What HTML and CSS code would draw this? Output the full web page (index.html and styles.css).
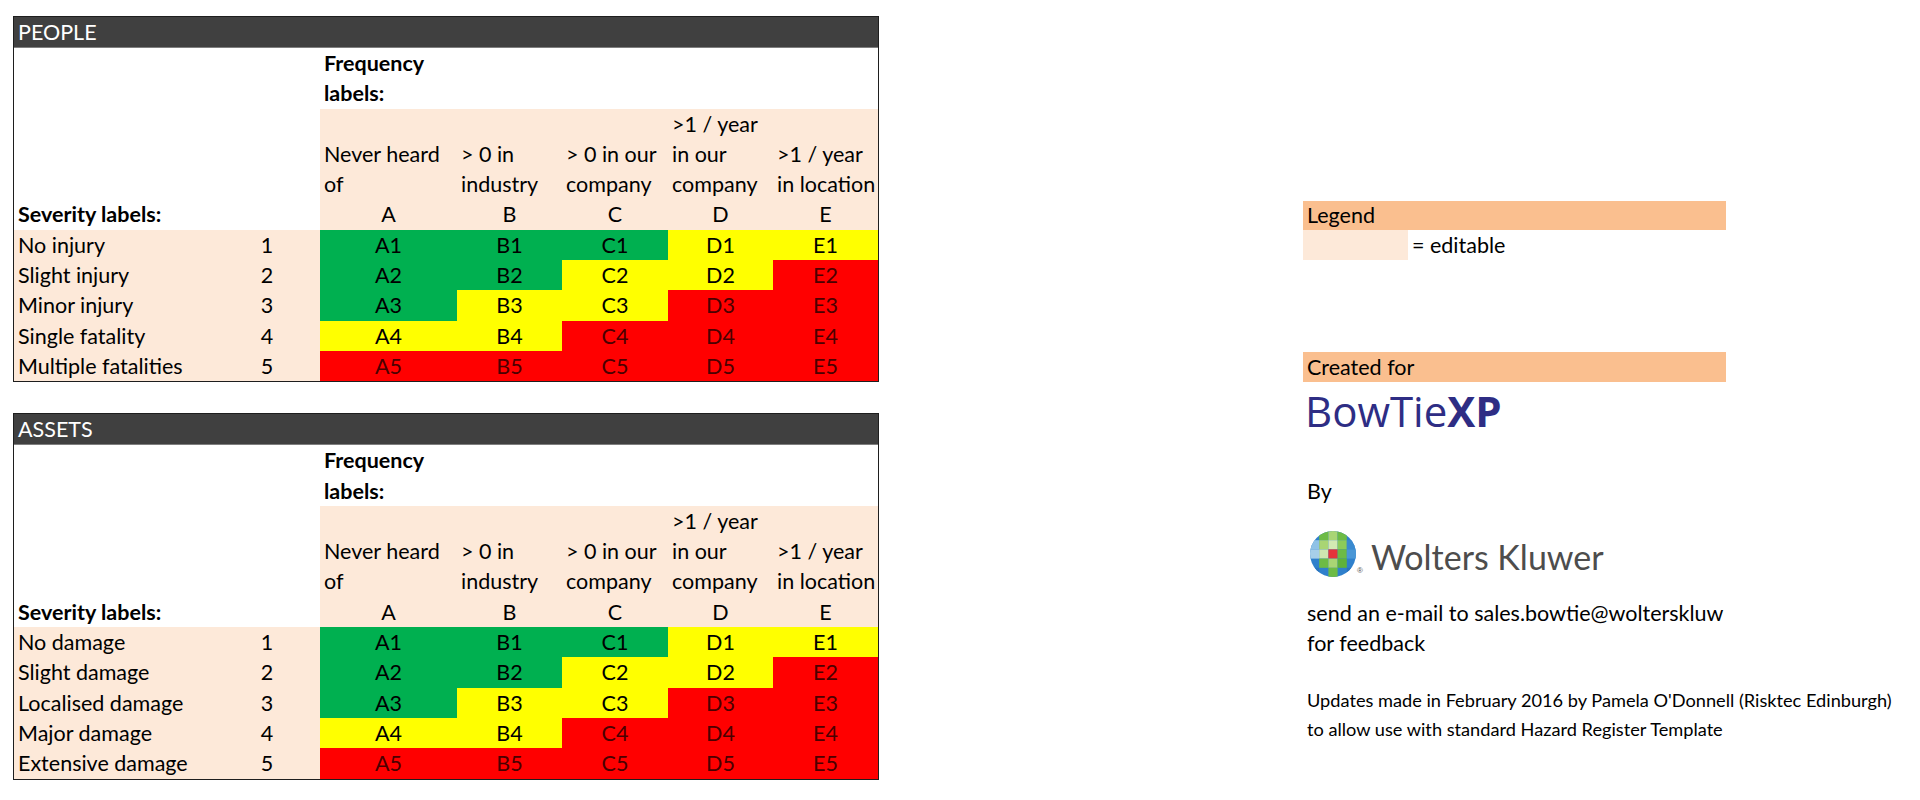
FILE: index.html
```html
<!DOCTYPE html>
<html lang="en">
<head>
<meta charset="utf-8">
<title>Risk matrix</title>
<link rel="stylesheet" href="styles.css">
</head>
<body>
<div class="page">
  <div class="left">
    <section class="matrix">
      <div class="mhead">PEOPLE</div>
      <div class="mgrid hdr">
        <div class="freq">Frequency<br>labels:</div>
        <div class="fl ca"><span>Never heard</span><span>of</span></div>
        <div class="fl cb"><span>&gt; 0 in</span><span>industry</span></div>
        <div class="fl cc"><span>&gt; 0 in our</span><span>company</span></div>
        <div class="fl cd"><span>&gt;1 / year</span><span>in our</span><span>company</span></div>
        <div class="fl ce"><span>&gt;1 / year</span><span>in location</span></div>
        <div class="sev">Severity labels:</div>
        <div class="let ca">A</div>
        <div class="let cb">B</div>
        <div class="let cc">C</div>
        <div class="let cd">D</div>
        <div class="let ce">E</div>
      </div>
      <div class="mgrid body">
        <div class="lab">No injury</div><div class="num">1</div>
        <div class="cell g">A1</div><div class="cell g">B1</div><div class="cell g">C1</div><div class="cell y">D1</div><div class="cell y">E1</div>
        <div class="lab">Slight injury</div><div class="num">2</div>
        <div class="cell g">A2</div><div class="cell g">B2</div><div class="cell y">C2</div><div class="cell y">D2</div><div class="cell r">E2</div>
        <div class="lab">Minor injury</div><div class="num">3</div>
        <div class="cell g">A3</div><div class="cell y">B3</div><div class="cell y">C3</div><div class="cell r">D3</div><div class="cell r">E3</div>
        <div class="lab">Single fatality</div><div class="num">4</div>
        <div class="cell y">A4</div><div class="cell y">B4</div><div class="cell r">C4</div><div class="cell r">D4</div><div class="cell r">E4</div>
        <div class="lab">Multiple fatalities</div><div class="num">5</div>
        <div class="cell r">A5</div><div class="cell r">B5</div><div class="cell r">C5</div><div class="cell r">D5</div><div class="cell r">E5</div>
      </div>
    </section>

    <section class="matrix">
      <div class="mhead">ASSETS</div>
      <div class="mgrid hdr">
        <div class="freq">Frequency<br>labels:</div>
        <div class="fl ca"><span>Never heard</span><span>of</span></div>
        <div class="fl cb"><span>&gt; 0 in</span><span>industry</span></div>
        <div class="fl cc"><span>&gt; 0 in our</span><span>company</span></div>
        <div class="fl cd"><span>&gt;1 / year</span><span>in our</span><span>company</span></div>
        <div class="fl ce"><span>&gt;1 / year</span><span>in location</span></div>
        <div class="sev">Severity labels:</div>
        <div class="let ca">A</div>
        <div class="let cb">B</div>
        <div class="let cc">C</div>
        <div class="let cd">D</div>
        <div class="let ce">E</div>
      </div>
      <div class="mgrid body">
        <div class="lab">No damage</div><div class="num">1</div>
        <div class="cell g">A1</div><div class="cell g">B1</div><div class="cell g">C1</div><div class="cell y">D1</div><div class="cell y">E1</div>
        <div class="lab">Slight damage</div><div class="num">2</div>
        <div class="cell g">A2</div><div class="cell g">B2</div><div class="cell y">C2</div><div class="cell y">D2</div><div class="cell r">E2</div>
        <div class="lab">Localised damage</div><div class="num">3</div>
        <div class="cell g">A3</div><div class="cell y">B3</div><div class="cell y">C3</div><div class="cell r">D3</div><div class="cell r">E3</div>
        <div class="lab">Major damage</div><div class="num">4</div>
        <div class="cell y">A4</div><div class="cell y">B4</div><div class="cell r">C4</div><div class="cell r">D4</div><div class="cell r">E4</div>
        <div class="lab">Extensive damage</div><div class="num">5</div>
        <div class="cell r">A5</div><div class="cell r">B5</div><div class="cell r">C5</div><div class="cell r">D5</div><div class="cell r">E5</div>
      </div>
    </section>
  </div>

  <aside class="right">
    <div class="bar">Legend</div>
    <div class="edit-row"><div class="swatch"></div><div class="edit-text">= editable</div></div>
    <div class="bar created">Created for</div>
    <div class="brand">BowTie<b>XP</b></div>
    <div class="by">By</div>
    <div class="wk">
      <svg class="globe" width="54" height="46" viewBox="0 0 54 46" aria-hidden="true">
        <defs>
          <clipPath id="gclip"><circle cx="23" cy="23" r="23"/></clipPath>
        </defs>
        <g clip-path="url(#gclip)">
          <rect x="0" y="0" width="46" height="46" fill="#2f80cc"/>
          <rect x="9.2" y="0" width="9.2" height="9.2" fill="#6dbb45"/>
          <rect x="18.4" y="0" width="9.2" height="9.2" fill="#a9d574"/>
          <rect x="27.6" y="0" width="9.2" height="9.2" fill="#6dbb45"/>

          <rect x="0" y="9.2" width="9.2" height="9.2" fill="#8fc2e6"/>
          <rect x="9.2" y="9.2" width="9.2" height="9.2" fill="#a9d574"/>
          <rect x="18.4" y="9.2" width="9.2" height="9.2" fill="#d3e9b3"/>
          <rect x="27.6" y="9.2" width="9.2" height="9.2" fill="#8ccb5a"/>
          <rect x="36.8" y="9.2" width="9.2" height="9.2" fill="#3a8ad0"/>

          <rect x="0" y="18.4" width="9.2" height="9.2" fill="#a7cfe9"/>
          <rect x="9.2" y="18.4" width="9.2" height="9.2" fill="#cfe6b0"/>
          <rect x="18.4" y="18.4" width="9.2" height="9.2" fill="#e5343a"/>
          <rect x="27.6" y="18.4" width="9.2" height="9.2" fill="#6dbb45"/>
          <rect x="36.8" y="18.4" width="9.2" height="9.2" fill="#4a97d6"/>

          <rect x="9.2" y="27.6" width="9.2" height="9.2" fill="#6dbb45"/>
          <rect x="18.4" y="27.6" width="9.2" height="9.2" fill="#a9d574"/>
          <rect x="27.6" y="27.6" width="9.2" height="9.2" fill="#5fb23c"/>

          <rect x="0" y="36.8" width="9.2" height="9.2" fill="#2a74bd"/>
          <rect x="18.4" y="36.8" width="9.2" height="9.2" fill="#6dbb45"/>
          <rect x="36.8" y="36.8" width="9.2" height="9.2" fill="#2a74bd"/>
        </g>
        <text x="47" y="42" font-size="8" fill="#555" font-family="Liberation Sans, sans-serif">®</text>
      </svg>
      <span class="wk-name">Wolters Kluwer</span>
    </div>
    <div class="mail">send an e-mail to sales.bowtie@wolterskluw<br>for feedback</div>
    <div class="upd">Updates made in February 2016 by Pamela O'Donnell (Risktec Edinburgh)<br>to allow use with standard Hazard Register Template</div>
  </aside>
</div>
</body>
</html>
```
FILE: styles.css
```css
html, body {
  margin: 0;
  padding: 0;
  background: #ffffff;
}
body {
  width: 1920px;
  height: 800px;
  overflow: hidden;
  font-family: Lato, "Liberation Sans", sans-serif;
  font-size: 21.5px;
  color: #000000;
}
.page {
  display: flex;
  align-items: flex-start;
}
.left {
  margin-left: 13px;
  padding-top: 16px;
  display: flex;
  flex-direction: column;
  gap: 31px;
}
.matrix {
  width: 866px;
  box-sizing: border-box;
  border: 1px solid #1e1e1e;
}
.mhead {
  height: 30px;
  line-height: 30px;
  background: #404040;
  color: #ffffff;
  padding-left: 4px;
  border-bottom: 1px solid #7f7f7f;
}
.mgrid {
  display: grid;
  grid-template-columns: 200px 106px 137px 105px 106px 105px 105px;
  grid-auto-rows: 30.3px;
  line-height: 30.3px;
}
.hdr {
  grid-template-rows: repeat(6, 30.3px);
}
.freq {
  grid-column: 3;
  grid-row: 1 / 3;
  font-weight: 700;
  padding-left: 4px;
  white-space: nowrap;
}
.sev {
  grid-column: 1;
  grid-row: 6;
  font-weight: 700;
  padding-left: 4px;
  white-space: nowrap;
}
.fl {
  grid-row: 3 / 6;
  background: #fde9d9;
  display: flex;
  flex-direction: column;
  justify-content: flex-end;
  padding-left: 4px;
  white-space: nowrap;
}
.let {
  grid-row: 6;
  background: #fde9d9;
  text-align: center;
}
.ca { grid-column: 3; }
.cb { grid-column: 4; }
.cc { grid-column: 5; }
.cd { grid-column: 6; }
.ce { grid-column: 7; }

.lab {
  background: #fde9d9;
  padding-left: 4px;
  white-space: nowrap;
}
.num {
  background: #fde9d9;
  text-align: center;
}
.cell {
  text-align: center;
}
.g { background: #00b050; }
.y { background: #ffff00; }
.r { background: #ff0000; color: #4a0000; }

.right {
  margin-left: 424px;
  padding-top: 201px;
  width: 423px;
}
.bar {
  height: 29px;
  line-height: 29px;
  background: #fabf8f;
  padding-left: 4px;
}
.edit-row {
  display: flex;
  height: 30px;
  line-height: 30px;
}
.swatch {
  width: 105px;
  background: #fde9d9;
}
.edit-text {
  padding-left: 4px;
}
.created {
  margin-top: 92px;
  height: 30px;
  line-height: 30px;
}
.brand {
  margin-top: 4px;
  font-family: "Open Sans", "Liberation Sans", sans-serif;
  font-size: 42px;
  line-height: 50px;
  color: #2e2d84;
  padding-left: 2px;
}
.brand b {
  font-weight: 700;
}
.by {
  margin-top: 40px;
  line-height: 30px;
  padding-left: 4px;
}
.wk {
  margin-top: 25px;
  display: flex;
  align-items: flex-start;
  height: 46px;
  padding-left: 7px;
}
.globe {
  display: block;
  flex: none;
}
.wk-name {
  margin-left: 7px;
  font-size: 34px;
  line-height: 46px;
  padding-top: 3px;
  color: #4d4d4d;
  white-space: nowrap;
}
.mail {
  margin-top: 21px;
  line-height: 30px;
  padding-left: 4px;
  white-space: nowrap;
}
.upd {
  margin-top: 28px;
  font-size: 18.2px;
  line-height: 29px;
  padding-left: 4px;
  white-space: nowrap;
}
```
